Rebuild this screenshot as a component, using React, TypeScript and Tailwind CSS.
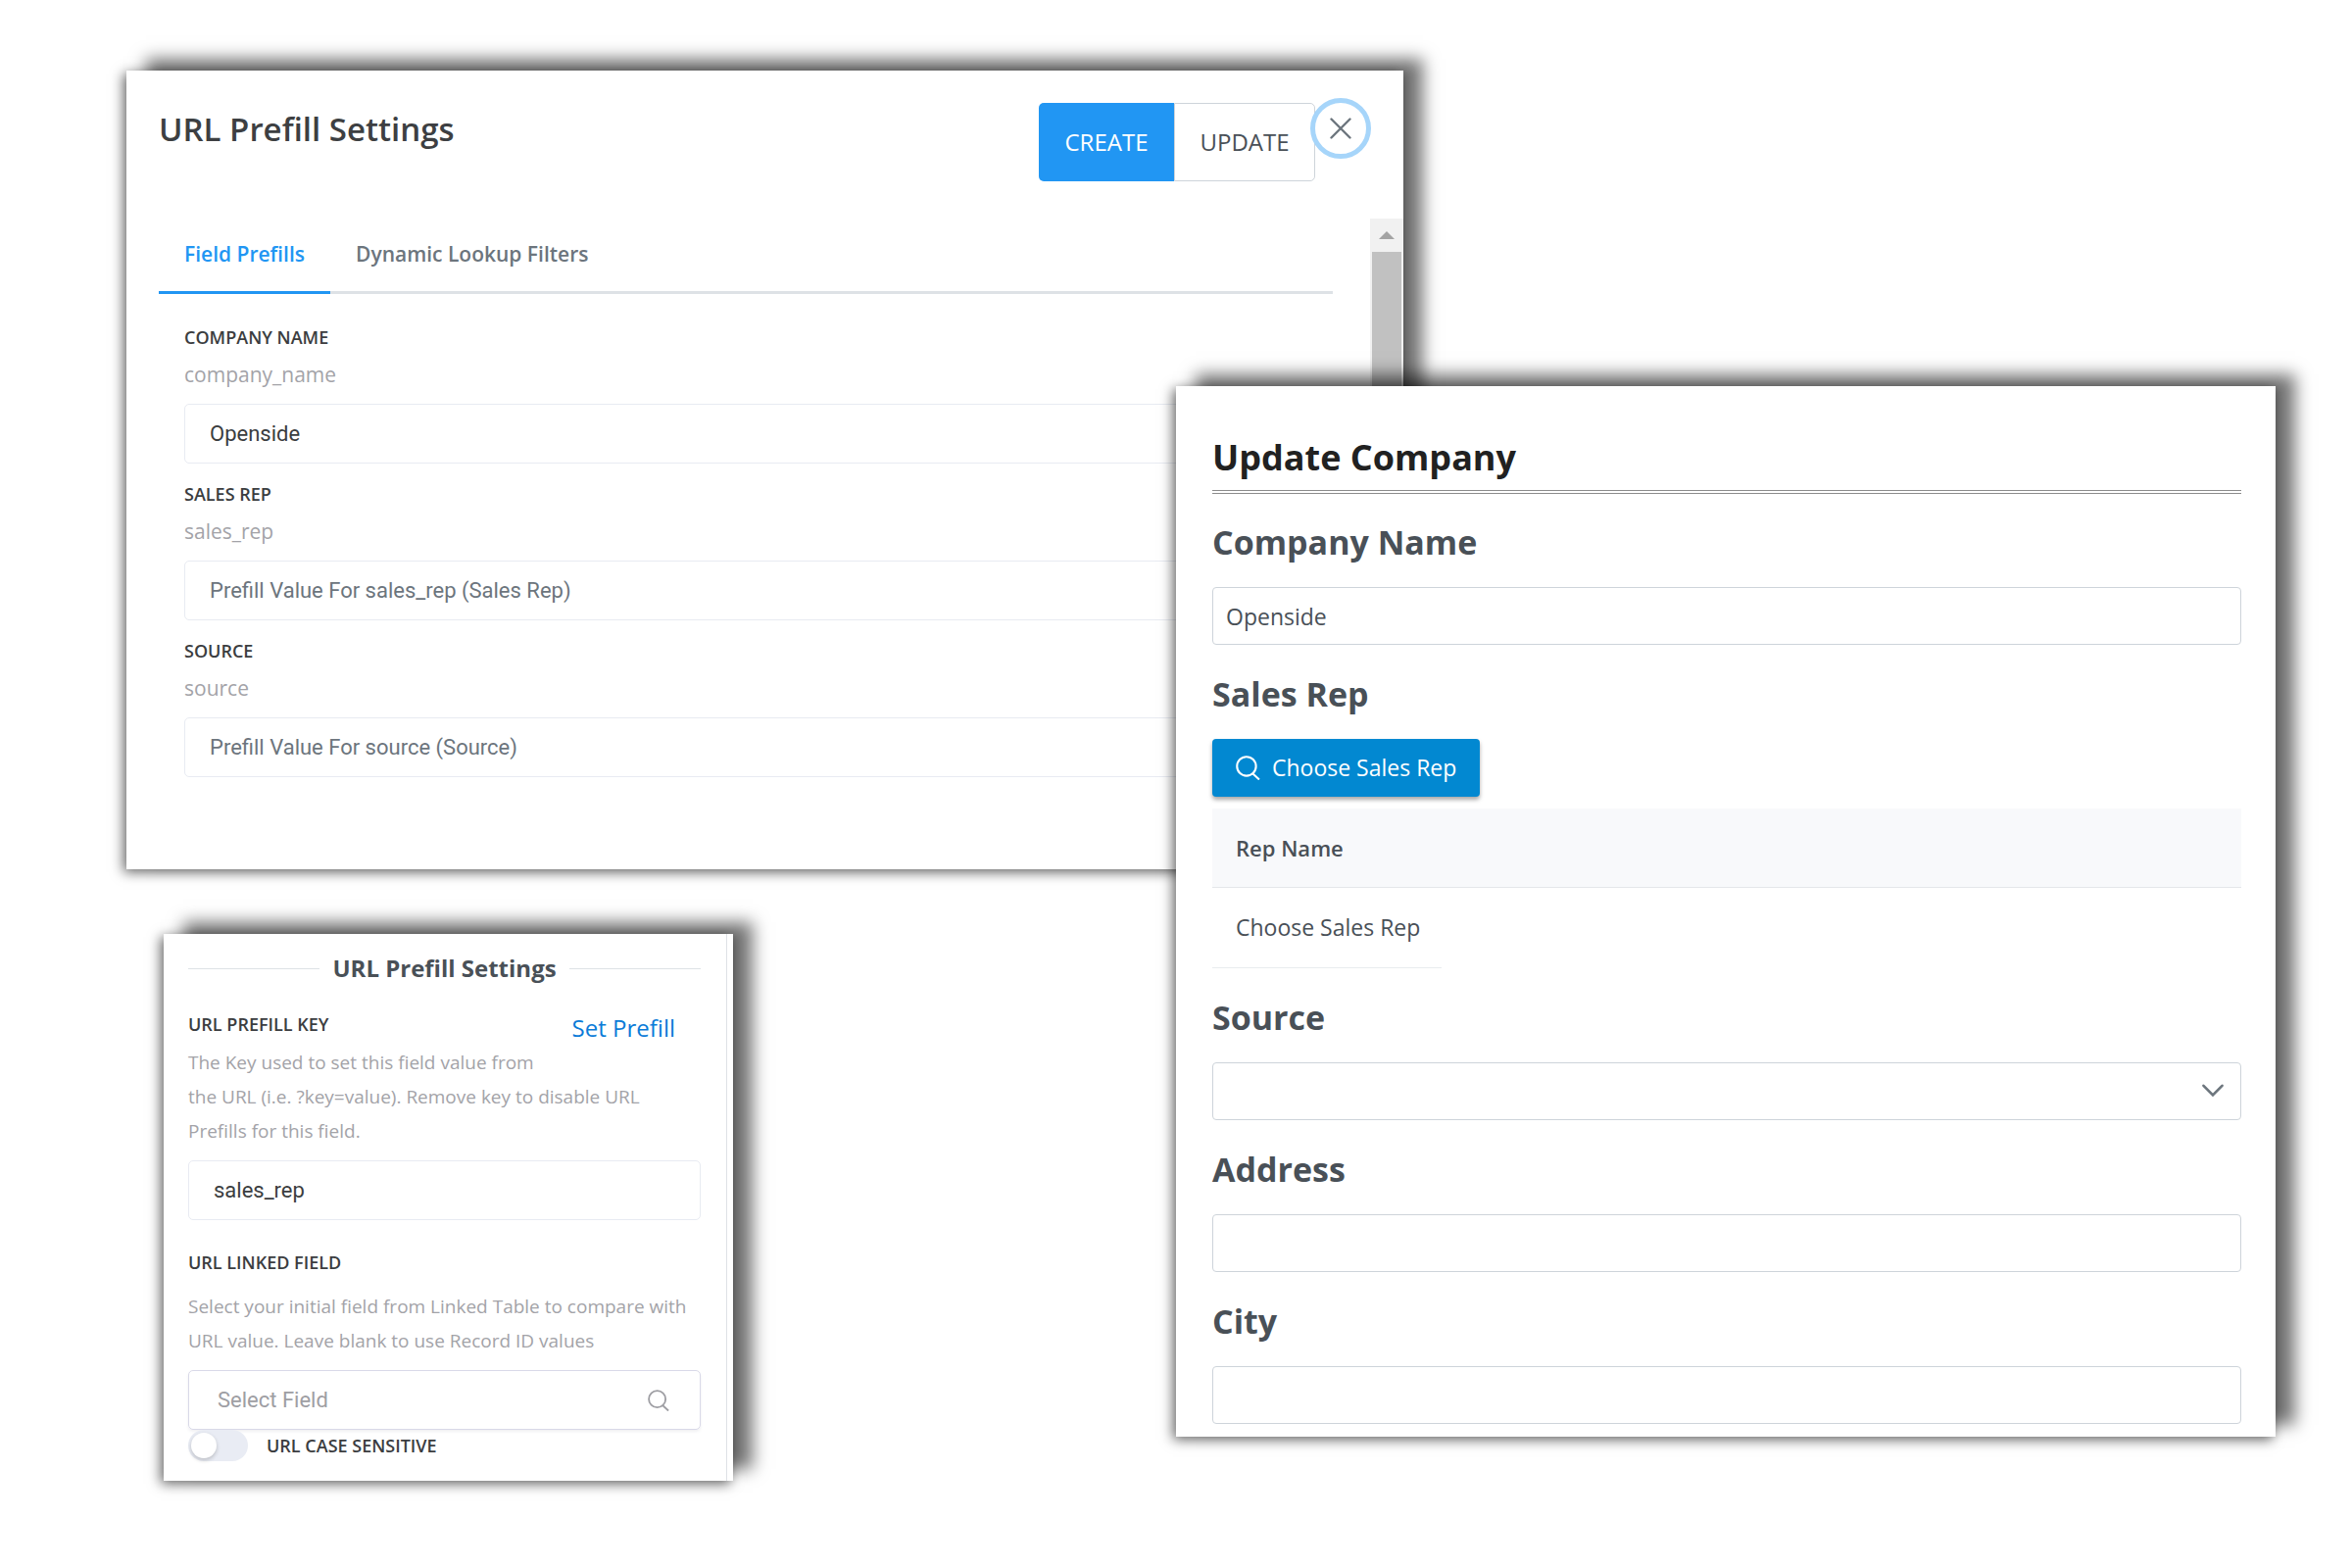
import React from "react";

const panelShadow =
  "shadow-[-3px_3px_12px_rgba(0,0,0,0.6),20px_-12px_16px_rgba(0,0,0,0.54)]";

function Search({ size }: { size: number }) {
  return (
    <svg width={size} height={size} viewBox="0 0 24 24" fill="none" stroke="currentColor" strokeWidth="2" aria-hidden="true">
      <circle cx="10.5" cy="10.5" r="9.3" />
      <path d="M16.5 17.5 23 23.5" />
    </svg>
  );
}

function PrefillField({ label, name, value }: { label: string; name: string; value?: string }) {
  return (
    <div className="flex flex-col">
      <label htmlFor={`prefill-${name}`} className="text-[18px] leading-[28px] font-semibold uppercase text-[#3b3d40]">
        {label}
      </label>
      <p className="mt-2 text-[21px] leading-[32px] text-[#a3a3a8]">{name}</p>
      <input
        id={`prefill-${name}`}
        type="text"
        defaultValue={value}
        placeholder={`Prefill Value For ${name} (${label})`}
        className="mt-[14px] h-[61px] w-full rounded-[5px] border border-[#e8ebf2] px-[25px] font-['Roboto',sans-serif] text-[22px] text-[#3b3d40] placeholder:text-[#6c757d]"
      />
    </div>
  );
}

function PrefillDialog() {
  return (
    <section className={`absolute top-[72px] right-[968px] left-[129px] flex flex-col bg-white ${panelShadow}`}>
      <header className="flex items-start px-[33px] pt-[33px] pb-[38px]">
        <h1 className="flex-1 text-[33px] leading-[54px] font-semibold text-[#3d3f42]">URL Prefill Settings</h1>
        <div className="flex h-[80px] text-[24px]">
          <button className="w-[138px] rounded-l-[5px] bg-[#2196f3] text-white">CREATE</button>
          <button className="w-[144px] rounded-r-[5px] border border-[#ced4da] text-[#495057]">UPDATE</button>
        </div>
        <button
          aria-label="Close"
          className="-mt-[5px] -ml-[5px] flex size-[62px] items-center justify-center rounded-full border-[5px] border-[#a6d5fa] bg-white text-[#6c757d]"
        >
          <svg width="22" height="22" viewBox="0 0 22 22" fill="none" stroke="currentColor" strokeWidth="2.4" strokeLinecap="round">
            <path d="M1.5 1.5 20.5 20.5M20.5 1.5 1.5 20.5" />
          </svg>
        </button>
      </header>
      <div className="flex">
        <div className="flex-1 pr-[38px] pb-[94px] pl-[33px]">
          <div role="tablist" className="flex h-[77px] border-b-[3px] border-[#dee2e6] text-[21px] font-semibold">
            <button role="tab" aria-selected="true" className="-mb-[3px] border-b-[3px] border-[#2196f3] px-[26px] text-[#2196f3]">
              Field Prefills
            </button>
            <button role="tab" aria-selected="false" className="px-[26px] text-[#6c757d]">
              Dynamic Lookup Filters
            </button>
          </div>
          <div className="flex flex-col gap-[17px] px-[26px] pt-[30px]">
            <PrefillField label="Company Name" name="company_name" value="Openside" />
            <PrefillField label="Sales Rep" name="sales_rep" />
            <PrefillField label="Source" name="source" />
          </div>
        </div>
        <div className="flex w-[34px] flex-col bg-[#f1f1f1] px-[2px]">
          <button aria-label="Scroll up" className="flex h-[34px] items-center justify-center text-[#a3a3a3]">
            <svg width="16" height="8" viewBox="0 0 16 8" fill="currentColor">
              <path d="M0 8 8 0l8 8z" />
            </svg>
          </button>
          <div className="flex-1 bg-[#c1c1c1]" />
        </div>
      </div>
    </section>
  );
}

const fieldLabel = "block text-[34px] leading-[50px] font-bold text-[#495057]";
const fieldBox = "h-[59px] w-full rounded-[4px] border border-[#ced4da] bg-white px-[13px] text-[23px] text-[#495057]";

function TextField({ id, label, value }: { id: string; label: string; value?: string }) {
  return (
    <div>
      <label htmlFor={id} className={fieldLabel}>
        {label}
      </label>
      <input id={id} type="text" defaultValue={value} className={`mt-[21px] block ${fieldBox}`} />
    </div>
  );
}

function UpdateCompany() {
  return (
    <section className={`absolute top-[394px] right-[78px] left-1/2 bg-white pt-[48px] pr-[35px] pb-[13px] pl-[37px] ${panelShadow}`}>
      <h2 className="border-b-4 border-double border-[#8c8c8c] pb-[8px] text-[36px] leading-[50px] font-bold text-[#212121]">
        Update Company
      </h2>
      <form className="mt-6 flex flex-col gap-[25px]">
        <TextField id="company" label="Company Name" value="Openside" />
        <div>
          <h3 className={fieldLabel}>Sales Rep</h3>
          <button
            type="button"
            className="mt-[21px] flex h-[59px] items-center gap-[12px] rounded-[4px] bg-[#0288d1] px-6 text-[23px] text-white shadow-[0_3px_4px_rgba(0,0,0,0.35)]"
          >
            <Search size={25} />
            Choose Sales Rep
          </button>
          <table className="mt-[12px] w-full border-separate border-spacing-0 text-left text-[23px] text-[#495057]">
            <thead>
              <tr>
                <th colSpan={2} className="h-[81px] border-b border-[#e4e7ea] bg-[#f8f9fb] px-6 text-[22px] font-semibold">
                  Rep Name
                </th>
              </tr>
            </thead>
            <tbody>
              <tr>
                <td className="h-[82px] w-[234px] border-b border-[#e9ecef] pl-6 whitespace-nowrap">Choose Sales Rep</td>
                <td />
              </tr>
            </tbody>
          </table>
        </div>
        <div>
          <label htmlFor="source" className={fieldLabel}>
            Source
          </label>
          <div className="relative mt-[21px]">
            <select id="source" className={`block appearance-none ${fieldBox}`}>
              <option value=""></option>
            </select>
            <svg
              width="22"
              height="14"
              viewBox="0 0 22 14"
              fill="none"
              stroke="currentColor"
              strokeWidth="2.6"
              strokeLinecap="round"
              className="pointer-events-none absolute top-[22px] right-[18px] text-[#6c757d]"
            >
              <path d="M1.5 1.8 11 11.5l9.500-9.700" />
            </svg>
          </div>
        </div>
        <TextField id="address" label="Address" />
        <TextField id="city" label="City" />
      </form>
    </section>
  );
}

const settingLabel = "text-[18px] leading-[28px] font-semibold text-[#3b3d40] uppercase";
const settingHelp = "text-[19px] leading-[35px] text-[#a3a3a8]";

function FieldSettings() {
  return (
    <section className={`absolute top-[953px] left-[167px] w-[581px] bg-white pr-[6px] ${panelShadow}`}>
      <div className="border-r border-[#dee2e6] pt-[18px] pr-[26px] pb-5 pl-[25px]">
        <div className="flex items-center gap-[13px]">
          <span className="h-px flex-1 bg-[#dee2e6]" />
          <h2 className="text-[24px] leading-[34px] font-bold text-[#495057]">URL Prefill Settings</h2>
          <span className="h-px flex-1 bg-[#dee2e6]" />
        </div>
        <div className="mt-[26px]">
          <a href="#prefill" className="float-right mr-[26px] ml-6 pb-1 text-[24px] leading-[36px] text-[#0b7bd8]">
            Set Prefill
          </a>
          <label htmlFor="prefill-key" className={`block ${settingLabel}`}>
            URL Prefill Key
          </label>
          <p className={`mt-[8px] ${settingHelp}`}>
            The Key used to set this field value from the URL (i.e. ?key=value). Remove key to disable URL Prefills for this field.
          </p>
        </div>
        <input
          id="prefill-key"
          type="text"
          defaultValue="sales_rep"
          className="mt-[12px] block h-[61px] w-full rounded-[5px] border border-[#e8ebf2] px-[25px] font-['Roboto',sans-serif] text-[22px] text-[#3b3d40]"
        />
        <label htmlFor="linked-field" className={`mt-[29px] block ${settingLabel}`}>
          URL Linked Field
        </label>
        <p className={`mt-[14px] ${settingHelp}`}>
          Select your initial field from Linked Table to compare with URL value. Leave blank to use Record ID values
        </p>
        <div className="mt-[12px] flex h-[61px] items-center rounded-[5px] border border-[#d9d9e8] pr-[31px] pl-[29px] text-[#9e9ea3] shadow-[0_2px_3px_rgba(60,60,100,0.08)]">
          <input
            id="linked-field"
            type="text"
            placeholder="Select Field"
            className="min-w-0 flex-1 font-['Roboto',sans-serif] text-[22px] placeholder:text-[#9e9ea3]"
          />
          <Search size={22} />
        </div>
        <label className={`flex items-center gap-[19px] ${settingLabel}`}>
          <input
            type="checkbox"
            role="switch"
            className="h-[32px] w-[61px] appearance-none rounded-full bg-[#e9ecf4] p-[3px] before:block before:size-[26px] before:rounded-full before:bg-white before:shadow-[0_2px_4px_rgba(0,0,0,0.2)] checked:bg-[#2196f3] checked:before:ml-auto"
          />
          URL Case Sensitive
        </label>
      </div>
    </section>
  );
}

export default function App() {
  return (
    <main className="relative min-h-screen bg-white font-['Open_Sans','Noto_Sans',sans-serif]">
      <PrefillDialog />
      <FieldSettings />
      <UpdateCompany />
    </main>
  );
}
